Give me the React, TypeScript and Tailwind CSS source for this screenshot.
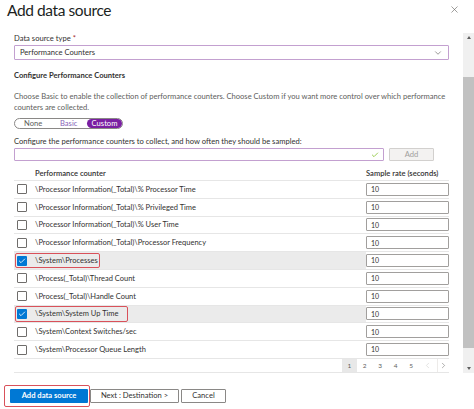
import { Check, ChevronDown, ChevronLeft, ChevronRight, X } from "lucide-react";

interface Counter {
  name: string;
  rate: string;
  checked?: boolean;
}

const counters: Counter[] = [
  { name: "\\Processor Information(_Total)\\% Processor Time", rate: "10" },
  { name: "\\Processor Information(_Total)\\% Privileged Time", rate: "10" },
  { name: "\\Processor Information(_Total)\\% User Time", rate: "10" },
  { name: "\\Processor Information(_Total)\\Processor Frequency", rate: "10" },
  { name: "\\System\\Processes", rate: "10", checked: true },
  { name: "\\Process(_Total)\\Thread Count", rate: "10" },
  { name: "\\Process(_Total)\\Handle Count", rate: "10" },
  { name: "\\System\\System Up Time", rate: "10", checked: true },
  { name: "\\System\\Context Switches/sec", rate: "10" },
  { name: "\\System\\Processor Queue Length", rate: "10" },
];

function Checkbox({ checked }: { checked?: boolean }) {
  if (checked) {
    return (
      <span className="flex h-[10px] w-[10px] items-center justify-center rounded-[1px] bg-[#0078d4]">
        <Check size={8} strokeWidth={2.5} className="text-white" />
      </span>
    );
  }
  return <span className="block h-[10px] w-[10px] rounded-[1px] border border-[#6f6d6b] bg-white" />;
}

function CounterRow({ counter }: { counter: Counter }) {
  return (
    <div className="flex h-[17.8px] items-center border-b border-[#e6e6e6]">
      <div
        className={
          counter.checked
            ? "relative flex h-full w-[352px] items-center bg-[#ebebeb] pl-[3px]"
            : "relative flex h-full w-[352px] items-center pl-[3px]"
        }
      >
        <Checkbox checked={counter.checked} />
        <span className="ml-[8px] whitespace-nowrap text-[7.5px] text-[#323130]">{counter.name}</span>
        {counter.checked && (
          <span
            className="absolute top-[0.5px] bottom-[0.5px] left-[1px] rounded-[2px] border-[1.5px] border-[#d9515a]"
            style={{ width: counter.name.length > 20 ? 113 : 85 }}
          />
        )}
      </div>
      <div className="flex h-[13px] w-[83px] items-center rounded-[1px] border border-[#a19f9d] bg-white pl-[4px] text-[7px] text-[#323130]">
        {counter.rate}
      </div>
    </div>
  );
}

export default function App() {
  return (
    <div
      className="flex h-[409px] w-[474px] flex-col overflow-hidden bg-white text-[#323130]"
      style={{ fontFamily: 'Lato, "Open Sans", sans-serif' }}
    >
      <div className="flex h-[33px] items-start justify-between pl-[7px] pr-[14px]">
        <h1 className="pt-[1px] text-[15.5px] leading-[18px] tracking-[-0.4px] text-[#201f1e]">Add data source</h1>
        <X size={11} strokeWidth={1.3} className="mt-[4px] text-[#605e5c]" />
      </div>

      <div className="flex h-[340px]">
        <div className="flex-1 pl-[14px] pr-[14px]">
          <div className="h-[11px] text-[7.6px] leading-[11px] text-[#323130]">
            Data source type <span className="text-[#a4262c]">*</span>
          </div>
          <div className="mt-[1px] flex h-[15px] items-center justify-between rounded-[1px] border border-[#c3a0d0] pl-[5px] pr-[5px] text-[7.6px]">
            <span>Performance Counters</span>
            <ChevronDown size={10} strokeWidth={1.5} className="text-[#605e5c]" />
          </div>

          <div className="mt-[10px] h-[11px] text-[7.6px] font-bold leading-[11px] text-[#323130]">
            Configure Performance Counters
          </div>
          <p className="mt-[10px] text-[7.6px] leading-[10.5px] text-[#605e5c]">
            Choose Basic to enable the collection of performance counters. Choose Custom if you want more control over which performance counters are collected.
          </p>

          <div className="mt-[6px] flex h-[11px] w-[109px] items-center rounded-full border border-[#8a8886] text-[7.6px]">
            <span className="ml-[9px] w-[17px] text-[#605e5c]">None</span>
            <span className="ml-[19px] w-[17px] text-[#8764b8]">Basic</span>
            <span className="ml-[10px] flex h-full flex-1 items-center justify-center rounded-full bg-[#7a1fa2] text-white">Custom</span>
          </div>

          <div className="mt-[7px] h-[10px] text-[7.6px] leading-[10px] text-[#323130]">
            Configure the performance counters to collect, and how often they should be sampled:
          </div>
          <div className="mt-[2px] flex h-[13px] items-center gap-[5px]">
            <div className="flex h-full w-[370px] items-center justify-end rounded-[1px] border border-[#c3a0d0] pr-[4px]">
              <Check size={8} strokeWidth={2} className="text-[#6bb700]" />
            </div>
            <div className="flex h-full w-[45px] items-center justify-center rounded-[1px] border border-[#d2d0ce] bg-[#f3f2f1] text-[7.6px] text-[#a19f9d]">
              Add
            </div>
          </div>

          <div className="mt-[4px] flex h-[16px] items-start whitespace-nowrap border-b border-[#e6e6e6] pt-[3px] text-[7.6px] font-semibold">
            <span className="w-[352px] pl-[21px]">Performance counter</span>
            <span>Sample rate (seconds)</span>
          </div>

          {counters.map((c) => (
            <CounterRow key={c.name} counter={c} />
          ))}

          <div className="flex h-[14px] items-center justify-end border-b border-[#e6e6e6] text-[6.5px] text-[#605e5c]">
            <span className="flex h-full w-[15px] items-center justify-center bg-[#e8e8e8]">1</span>
            <span className="w-[15.5px] text-center">2</span>
            <span className="w-[15.5px] text-center">3</span>
            <span className="w-[15.5px] text-center">4</span>
            <span className="w-[15.5px] text-center">5</span>
            <ChevronLeft size={9} strokeWidth={1.3} className="ml-[4px] text-[#c8c6c4]" />
            <span className="ml-[5px] flex h-full w-[12px] items-center justify-center border-l border-[#edebe9]">
              <ChevronRight size={9} strokeWidth={1.3} className="text-[#605e5c]" />
            </span>
          </div>
        </div>

        <div className="flex w-[11px] flex-col bg-[#f0f0f0]">
          <div className="flex h-[9px] items-center justify-center">
            <span className="h-0 w-0 border-x-[2.5px] border-b-[3px] border-x-transparent border-b-[#606060]" />
          </div>
          <div className="mt-[35px] h-[271px] bg-[#c1c1c1]" />
          <div className="flex flex-1 items-end justify-center pb-[3px]">
            <span className="h-0 w-0 border-x-[2.5px] border-t-[3px] border-x-transparent border-t-[#606060]" />
          </div>
        </div>
      </div>

      <div className="flex items-center gap-[2px] pl-[10px] pt-[16px] text-[7.6px]">
        <div className="relative">
          <button
            type="button"
            className="flex h-[14px] w-[78px] items-center justify-center rounded-[1px] bg-[#0078d4] font-bold text-white"
          >
            Add data source
          </button>
          <span className="absolute -top-[4px] -left-[6px] h-[22px] w-[86px] rounded-[2px] border-[1.5px] border-[#d9515a]" />
        </div>
        <button
          type="button"
          className="flex h-[14px] w-[89px] items-center justify-center rounded-[1px] border border-[#8a8886] bg-white text-[#323130]"
        >
          Next : Destination &gt;
        </button>
        <button
          type="button"
          className="flex h-[14px] w-[45px] items-center justify-center rounded-[1px] border border-[#8a8886] bg-white text-[#323130]"
        >
          Cancel
        </button>
      </div>
    </div>
  );
}
